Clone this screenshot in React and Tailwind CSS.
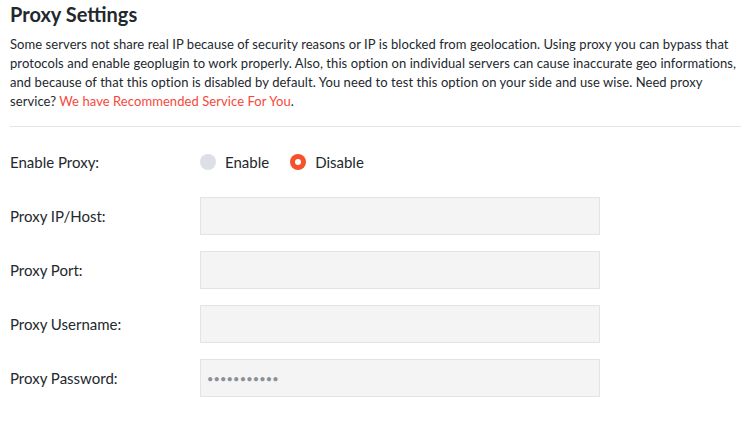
import { useState } from 'react'

const fields = [
  { id: 'proxy-host', label: 'Proxy IP/Host:', type: 'text', value: '' },
  { id: 'proxy-port', label: 'Proxy Port:', type: 'text', value: '' },
  { id: 'proxy-username', label: 'Proxy Username:', type: 'text', value: '' },
  { id: 'proxy-password', label: 'Proxy Password:', type: 'password', value: '12345678901' },
]

function Radio({ checked, label, onClick }) {
  return (
    <button type="button" onClick={onClick} className="flex items-center gap-[9px] cursor-pointer">
      {checked ? (
        <span className="w-4 h-4 rounded-full bg-[#f5512b] flex items-center justify-center">
          <span className="w-[6px] h-[6px] rounded-full bg-white" />
        </span>
      ) : (
        <span className="w-4 h-4 rounded-full bg-[#dcdfe5]" />
      )}
      <span className="text-[15px] text-[#23282d]">{label}</span>
    </button>
  )
}

export default function App() {
  const [enabled, setEnabled] = useState(false)

  return (
    <div className="bg-white min-h-screen px-[10px] text-[#23282d] font-['Lato','Noto_Sans',sans-serif]">
      {/* Heading + description */}
      <h2 className="text-[20px] font-bold leading-[24px] pt-[2px]">Proxy Settings</h2>
      <p className="text-[13px] leading-[19px] tracking-[0.07px] mt-[9px]">
        Some servers not share real IP because of security reasons or IP is blocked from geolocation. Using proxy you can bypass that
        protocols and enable geoplugin to work properly. Also, this option on individual servers can cause inaccurate geo informations,
        and because of that this option is disabled by default. You need to test this option on your side and use wise. Need proxy
        service? <a href="#" className="text-[#f6483b]">We have Recommended Service For You</a>.
      </p>

      <hr className="border-0 border-t border-[#e5e5e5] mt-[15px] mr-[3px]" />

      {/* Form */}
      <div className="flex flex-col gap-4 mt-4">
        <div className="flex items-center h-[38px]">
          <div className="w-[190px] text-[15px]">Enable Proxy:</div>
          <div className="flex items-center gap-[21px]">
            <Radio label="Enable" checked={enabled} onClick={() => setEnabled(true)} />
            <Radio label="Disable" checked={!enabled} onClick={() => setEnabled(false)} />
          </div>
        </div>

        {fields.map((f) => (
          <div key={f.id} className="flex items-center h-[38px]">
            <label htmlFor={f.id} className="w-[190px] text-[15px]">{f.label}</label>
            <input
              id={f.id}
              type={f.type}
              defaultValue={f.value}
              className="w-[400px] h-[38px] bg-[#f4f4f4] border border-[#e3e3e3] px-[6px] text-[11px] tracking-[0.15px] text-[#8a909a] outline-none"
            />
          </div>
        ))}
      </div>
    </div>
  )
}
